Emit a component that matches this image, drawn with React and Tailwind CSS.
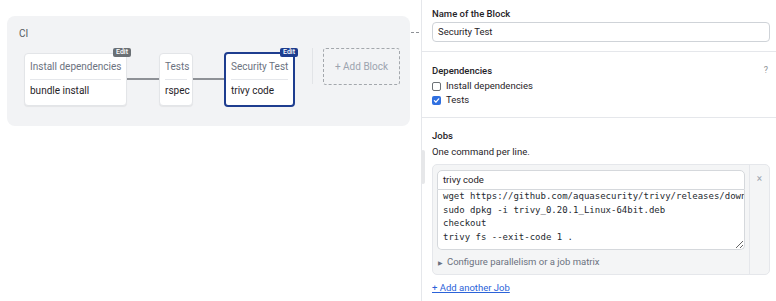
import React from "react";

const sans = { fontFamily: "Roboto, 'Liberation Sans', sans-serif" };

function Card({ title, cmd, width, active, badge }) {
  return (
    <div
      className={
        "relative bg-white rounded-[4px] shrink-0 " +
        (active
          ? "border-2 border-[#1e3d8f] mt-[4px] px-[5px] pt-[6px] pb-[7px]"
          : "border border-[#e3e5e8] mt-[5px] px-[5px] pt-[6px] pb-[7px] shadow-[0_1px_1px_rgba(0,0,0,0.06)]")
      }
      style={{ width }}
    >
      {badge && (
        <div
          className={
            "absolute h-[9px] w-[18px] rounded-[2px] text-white text-[7px] leading-[9px] font-medium text-center " +
            (active ? "bg-[#1e3d8f] top-[-6px] right-[-5px]" : "bg-[#6b7075] top-[-6px] right-[-5px]")
          }
        >
          Edit
        </div>
      )}
      <div className="text-[10px] leading-[14px] text-[#6b7280] whitespace-nowrap">{title}</div>
      <div className="h-px bg-[#e5e7eb] mt-[5px]" />
      <div className="text-[10px] leading-[14px] text-[#1f2328] mt-[4px] whitespace-nowrap">{cmd}</div>
    </div>
  );
}

function Line({ w }) {
  return <div className="h-[2px] bg-[#8e9196] mt-[30px] shrink-0" style={{ width: w }} />;
}

export default function App() {
  return (
    <div className="w-[776px] h-[301px] bg-white flex overflow-hidden" style={sans}>
      {/* Left canvas */}
      <div className="w-[421px] shrink-0 flex items-start pl-[7px] pt-[16px]">
        <div className="w-[403px] h-[110px] rounded-[8px] bg-[#f2f3f5] pl-[12px] pt-[11px] shrink-0">
          <div className="text-[10px] leading-[14px] text-[#555b61]">CI</div>
          <div className="flex items-start mt-[7px] ml-[5px]">
            <Card title="Install dependencies" cmd="bundle install" width="103px" badge />
            <Line w="32px" />
            <Card title="Tests" cmd="rspec" width="34px" />
            <Line w="31px" />
            <Card title="Security Test" cmd="trivy code" width="71px" active badge />
            <div className="w-px h-[36px] bg-[#e2e4e7] ml-[17px] shrink-0" />
            <div className="ml-[10px] w-[77px] h-[37px] border-[1.5px] border-dashed border-[#a3a7ac] rounded-[3px] flex items-center justify-center text-[10px] text-[#9ca3af] whitespace-nowrap shrink-0">
              + Add Block
            </div>
          </div>
        </div>
        <div className="w-[8px] ml-[1px] mt-[16px] border-t-[1.5px] border-dashed border-[#8e9196] shrink-0" />
      </div>

      {/* Right panel */}
      <div className="relative flex-1 border-l border-[#e5e7eb] pl-[10px] pr-[6px] text-[9.5px]">
        <div className="absolute left-[-1px] top-[150px] w-[4px] h-[34px] rounded-full bg-[#e6e7e9]" />
        {/* Name */}
        <div className="pt-[7px] pb-[9px] border-b border-[#e5e7eb] -ml-[10px] pl-[10px] -mr-[6px] pr-[6px]">
          <div className="leading-[14px] font-medium text-[#1f2328]">Name of the Block</div>
          <div className="mt-[1px] h-[20px] border border-[#cfd3d8] rounded-[4px] pl-[5px] flex items-center text-[#1f2328]">
            Security Test
          </div>
        </div>
        {/* Dependencies */}
        <div className="pt-[12px] pb-[10px] border-b border-[#e5e7eb] -ml-[10px] pl-[10px] -mr-[6px] pr-[6px]">
          <div className="flex justify-between items-center">
            <div className="leading-[14px] font-medium text-[#1f2328]">Dependencies</div>
            <div className="text-[9px] text-[#8e9196] mr-[2px]">?</div>
          </div>
          <div className="mt-[1px] flex items-center h-[14px] gap-[5px]">
            <span className="w-[9px] h-[9px] border border-[#6b7075] rounded-[2px] bg-white" />
            <span className="text-[#1f2328]">Install dependencies</span>
          </div>
          <div className="flex items-center h-[14px] gap-[5px]">
            <span className="w-[9px] h-[9px] rounded-[2px] bg-[#2f6fe0] flex items-center justify-center">
              <svg width="7" height="7" viewBox="0 0 10 10">
                <path d="M2 5.2 L4.2 7.4 L8.2 2.6" fill="none" stroke="white" strokeWidth="1.8" strokeLinecap="round" strokeLinejoin="round" />
              </svg>
            </span>
            <span className="text-[#1f2328]">Tests</span>
          </div>
        </div>
        {/* Jobs */}
        <div className="pt-[11px]">
          <div className="leading-[14px] font-medium text-[#1f2328]">Jobs</div>
          <div className="mt-[2px] leading-[14px] text-[#1f2328]">One command per line.</div>
          <div className="mt-[5px] h-[111px] rounded-[5px] border border-[#e5e7eb] bg-[#f4f5f6] flex">
            <div className="w-[316px] pl-[4px] pt-[5px] pr-[4px]">
              <div className="h-[20px] bg-white border border-[#d5d8dc] rounded-t-[5px] pl-[5px] flex items-center text-[#1f2328]">
                trivy code
              </div>
              <textarea
                readOnly
                wrap="off"
                className="block w-full h-[60px] bg-white border border-t-0 border-[#d5d8dc] rounded-b-[5px] pl-[5px] pt-[0px] text-[9px] leading-[13.5px] text-[#24292f] overflow-hidden outline-none resize-y"
                style={{ fontFamily: "'DejaVu Sans Mono', 'Liberation Mono', monospace" }}
                value={
                  "wget https://github.com/aquasecurity/trivy/releases/download/v0.20.1/trivy_0.20.1_Linux-64bit.deb\nsudo dpkg -i trivy_0.20.1_Linux-64bit.deb\ncheckout\ntrivy fs --exit-code 1 ."
                }
              />
              <div className="mt-[5px] flex items-center text-[#6b7280]">
                <span className="text-[6px] mr-[4px] ml-[1px]">▶</span>
                Configure parallelism or a job matrix
              </div>
            </div>
            <div className="flex-1 border-l border-[#e5e7eb] flex justify-center pt-[9px]">
              <span className="text-[10px] leading-[10px] text-[#9ca3af]">×</span>
            </div>
          </div>
          <div className="mt-[6px] leading-[14px] text-[#2b63d9] underline">+ Add another Job</div>
        </div>
      </div>
    </div>
  );
}
